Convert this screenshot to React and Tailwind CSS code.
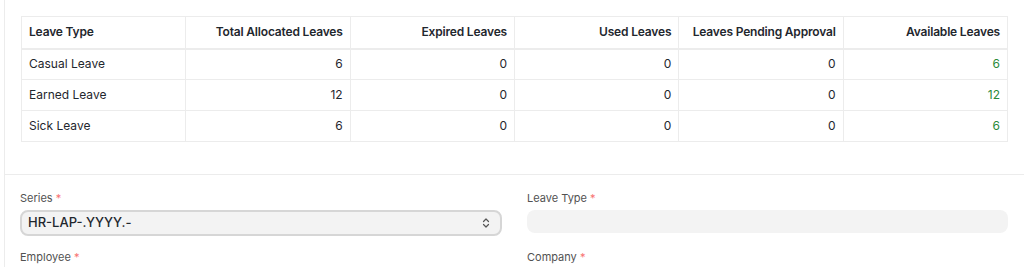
import React from "react";

const rows = [
  ["Casual Leave", 6, 0, 0, 0, 6],
  ["Earned Leave", 12, 0, 0, 0, 12],
  ["Sick Leave", 6, 0, 0, 0, 6],
];

const heads = [
  "Leave Type",
  "Total Allocated Leaves",
  "Expired Leaves",
  "Used Leaves",
  "Leaves Pending Approval",
  "Available Leaves",
];

function Label({ children }) {
  return (
    <div className="text-[11px] leading-[14px] text-[#525252] mb-[5px]">
      {children} <span className="text-[#f87171]">*</span>
    </div>
  );
}

export default function App() {
  return (
    <div
      className="w-[1024px] h-[267px] bg-white overflow-hidden"
      style={{ fontFamily: "Inter, 'Noto Sans', sans-serif" }}
    >
      <div className="ml-[4px] h-full border-l border-[#ececec]">
        <div className="pt-[16px] pl-[16px] pr-[16px] pb-[32px] border-b border-[#ececec]">
          <table className="w-[987px] border-collapse table-fixed text-[12px] text-[#1f272e]">
            <thead>
              <tr className="h-[32px]">
                {heads.map((h, i) => (
                  <th
                    key={h}
                    className={`border border-[#ececec] border-b-2 px-[7px] font-semibold tracking-[-0.015em] whitespace-nowrap ${
                      i === 0 ? "text-left" : "text-right"
                    }`}
                  >
                    {h}
                  </th>
                ))}
              </tr>
            </thead>
            <tbody>
              {rows.map((r) => (
                <tr key={r[0]} className="h-[31px]">
                  {r.map((c, i) => (
                    <td
                      key={i}
                      className={`border border-[#ececec] px-[7px] ${
                        i === 0 ? "text-left" : "text-right"
                      } ${i === 5 ? "text-[#2a8a3a]" : ""}`}
                    >
                      {c}
                    </td>
                  ))}
                </tr>
              ))}
            </tbody>
          </table>
        </div>
        <div className="grid grid-cols-2 gap-x-[24px] pt-[16px] pl-[15px] pr-[16px]">
          <div>
            <Label>Series</Label>
            <div className="h-[26px] rounded-[8px] border-2 border-[#d6d6d6] bg-[#f3f3f3] flex items-center justify-between pl-[6px] pr-[10px]">
              <span className="text-[13px] font-medium text-[#1f272e]">HR-LAP-.YYYY.-</span>
              <svg width="8" height="12" viewBox="0 0 8 12" fill="none" stroke="#555" strokeWidth="1.2" strokeLinecap="round" strokeLinejoin="round">
                <path d="M1.5 4.5 L4 2 L6.5 4.5" />
                <path d="M1.5 7.5 L4 10 L6.5 7.5" />
              </svg>
            </div>
            <div className="mt-[14px]">
              <Label>Employee</Label>
            </div>
          </div>
          <div className="pl-[1px]">
            <Label>Leave Type</Label>
            <div className="mt-[2px] h-[23px] rounded-[8px] bg-[#f3f3f3]" />
            <div className="mt-[17px]">
              <Label>Company</Label>
            </div>
          </div>
        </div>
      </div>
    </div>
  );
}
